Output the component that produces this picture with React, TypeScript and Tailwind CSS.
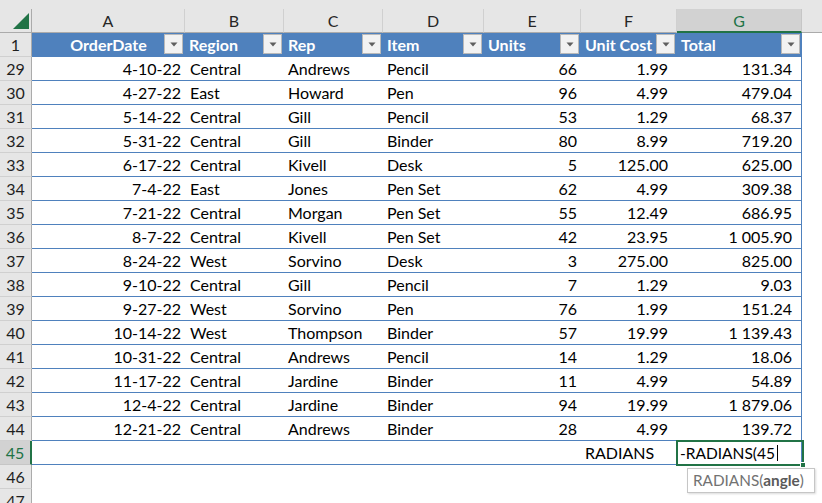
import React from "react";

const rows: [number, string, string, string, string, string, string, string][] = [
  [29, "4-10-22", "Central", "Andrews", "Pencil", "66", "1.99", "131.34"],
  [30, "4-27-22", "East", "Howard", "Pen", "96", "4.99", "479.04"],
  [31, "5-14-22", "Central", "Gill", "Pencil", "53", "1.29", "68.37"],
  [32, "5-31-22", "Central", "Gill", "Binder", "80", "8.99", "719.20"],
  [33, "6-17-22", "Central", "Kivell", "Desk", "5", "125.00", "625.00"],
  [34, "7-4-22", "East", "Jones", "Pen Set", "62", "4.99", "309.38"],
  [35, "7-21-22", "Central", "Morgan", "Pen Set", "55", "12.49", "686.95"],
  [36, "8-7-22", "Central", "Kivell", "Pen Set", "42", "23.95", "1 005.90"],
  [37, "8-24-22", "West", "Sorvino", "Desk", "3", "275.00", "825.00"],
  [38, "9-10-22", "Central", "Gill", "Pencil", "7", "1.29", "9.03"],
  [39, "9-27-22", "West", "Sorvino", "Pen", "76", "1.99", "151.24"],
  [40, "10-14-22", "West", "Thompson", "Binder", "57", "19.99", "1 139.43"],
  [41, "10-31-22", "Central", "Andrews", "Pencil", "14", "1.29", "18.06"],
  [42, "11-17-22", "Central", "Jardine", "Binder", "11", "4.99", "54.89"],
  [43, "12-4-22", "Central", "Jardine", "Binder", "94", "19.99", "1 879.06"],
  [44, "12-21-22", "Central", "Andrews", "Binder", "28", "4.99", "139.72"],
];

const grid = "grid grid-cols-[32px_153px_99px_99px_101px_97px_96px_125px_1fr]";

function DropBtn() {
  return (
    <div className="absolute right-[2px] top-[1px] w-[19px] h-[20px] bg-[#f2f2f2] border border-[#b9b9b9] flex items-center justify-center">
      <svg width="8" height="5" viewBox="0 0 8 5">
        <polygon points="0.5,0.5 7.5,0.5 4,4.5" fill="#5f5f5f" />
      </svg>
    </div>
  );
}

function RowHead({ n, sel }: { n: number | string; sel?: boolean }) {
  return sel ? (
    <div className="h-[24px] pt-[1px] bg-[#d2d2d2] border-r-2 border-r-[#217346] border-b border-b-[#c6c6c6] flex items-center justify-center text-[#217346]">
      {n}
    </div>
  ) : (
    <div className="h-[24px] pt-[1px] bg-[#e6e6e6] border-r border-r-[#ababab] border-b border-b-[#d0d0d0] flex items-center justify-center text-[#1f1f1f]">
      {n}
    </div>
  );
}

const cellB = "h-[24px] pt-[1px] border-b border-b-[#4f81bd] flex items-center whitespace-nowrap overflow-hidden text-black";

export default function App() {
  const letters = ["A", "B", "C", "D", "E", "F", "G"];
  const headers = ["OrderDate", "Region", "Rep", "Item", "Units", "Unit Cost", "Total"];
  return (
    <div className="relative w-[822px] h-[503px] overflow-hidden bg-white text-[16px] leading-none" style={{ fontFamily: "Lato, 'Liberation Sans', sans-serif" }}>
      <div className="h-[9px] bg-[#e6e6e6]" />
      {/* column header */}
      <div className={grid}>
        <div className="h-[24px] bg-[#e6e6e6] border-r border-r-[#ababab] border-b border-b-[#ababab] relative">
          <svg className="absolute left-[13px] top-[4px]" width="16" height="16" viewBox="0 0 16 16">
            <polygon points="16,0 16,16 0,16" fill="#217346" />
          </svg>
        </div>
        {letters.map((l) =>
          l === "G" ? (
            <div key={l} className="h-[24px] pt-[2px] bg-[#d2d2d2] border-b-2 border-b-[#217346] border-r border-r-[#c6c6c6] flex items-center justify-center text-[#217346] text-[16px]">
              {l}
            </div>
          ) : (
            <div key={l} className="h-[24px] pt-[1px] bg-[#e6e6e6] border-b border-b-[#ababab] border-r border-r-[#d0d0d0] flex items-center justify-center text-[#262626] text-[16px]">
              {l}
            </div>
          )
        )}
        <div className="h-[24px] bg-[#e6e6e6] border-b border-b-[#ababab]" />
      </div>
      {/* header row 1 */}
      <div className={grid}>
        <RowHead n={1} />
        {headers.map((h, i) => (
          <div
            key={h}
            className={`relative h-[24px] pt-[1px] bg-[#4f81bd] border-b border-b-[#4f81bd] flex items-center text-white font-bold whitespace-nowrap ${i === 0 ? "justify-center" : "pl-[4px]"}`}
          >
            {h}
            <DropBtn />
          </div>
        ))}
        <div className="h-[24px]" />
      </div>
      {rows.map((r) => (
        <div key={r[0]} className={grid}>
          <RowHead n={r[0]} />
          <div className={`${cellB} justify-end pr-[4px]`}>{r[1]}</div>
          <div className={`${cellB} pl-[5px]`}>{r[2]}</div>
          <div className={`${cellB} pl-[4px]`}>{r[3]}</div>
          <div className={`${cellB} pl-[4px]`}>{r[4]}</div>
          <div className={`${cellB} justify-end pr-[4px]`}>{r[5]}</div>
          <div className={`${cellB} justify-end pr-[9px]`}>{r[6]}</div>
          <div className={`${cellB} justify-end pr-[9px] border-r border-r-[#4f81bd]`}>{r[7]}</div>
          <div className="h-[24px]" />
        </div>
      ))}
      {/* row 45 */}
      <div className={grid}>
        <RowHead n={45} sel />
        <div className={cellB} />
        <div className={cellB} />
        <div className={cellB} />
        <div className={cellB} />
        <div className={cellB} />
        <div className={`${cellB} pl-[4px]`}>RADIANS</div>
        <div className={`${cellB} border-r border-r-[#4f81bd]`} />
        <div className="h-[24px]" />
      </div>
      <div className={grid}>
        <RowHead n={46} />
      </div>
      <div className={grid}>
        <RowHead n={47} />
      </div>

      {/* active cell */}
      <div className="absolute left-[676px] top-[440px] w-[128px] h-[26px] border-2 border-[#217346] flex items-center pl-[2px] pt-[1px] text-black text-[15.5px]">
        <span>-RADIANS(45</span>
        <span className="inline-block w-px h-[16px] bg-black ml-[2px] -mt-[1px]" />
        <div className="absolute -right-[4px] -bottom-[4px] w-[6px] h-[6px] bg-[#217346] border border-white" />
      </div>
      {/* tooltip */}
      <div className="absolute left-[687px] top-[468px] w-[128px] h-[25px] bg-white border border-[#c6c6c6] shadow-[1px_1px_2px_rgba(0,0,0,0.15)] flex items-center pl-[5px] pt-[1px] text-[#727272] text-[15.3px] whitespace-nowrap">
        RADIANS(<span className="font-bold text-[#5a5a5a]">angle</span>)
      </div>
    </div>
  );
}
